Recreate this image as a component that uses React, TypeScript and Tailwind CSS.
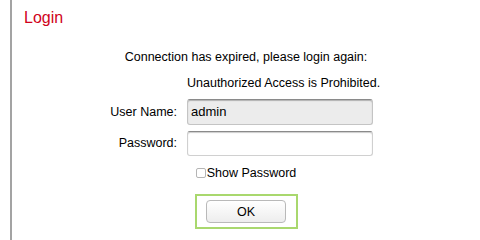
export default function App() {
  return (
    <div className="h-[240px] w-[480px] overflow-hidden bg-white font-['Liberation_Sans',Arial,sans-serif] text-[12px] text-black">
      <div className="ml-[10px] h-full border-l-2 border-[#a3a3a3] pl-[12px]">
        <h1 className="pt-[8px] text-[16px] leading-[20px] text-[#d0021b]">Login</h1>

        <p className="mt-[22px] whitespace-nowrap pr-[12px] text-center text-[12.5px] leading-[15px]">
          Connection has expired, please login again:
        </p>

        <div className="mt-[11px] flex">
          <div className="w-[153px]" />
          <p className="ml-[10px] w-[186px] whitespace-nowrap text-center text-[12.5px] leading-[15px]">
            Unauthorized Access is Prohibited.
          </p>
        </div>

        <div className="mt-[8px] flex items-center">
          <label className="w-[153px] text-right text-[12.5px]">User Name:</label>
          <div className="ml-[10px] flex h-[26px] w-[186px] items-center rounded-[3px] border border-[#c4c4c4] border-t-[#8a8a8a] bg-[#ececec] px-[3px] text-[13px] shadow-[inset_0_1px_1px_rgba(0,0,0,0.25)]">
            admin
          </div>
        </div>

        <div className="mt-[6px] flex items-center">
          <label className="w-[153px] text-right text-[12.5px]">Password:</label>
          <div className="ml-[10px] h-[25px] w-[186px] rounded-[3px] border border-[#d0d0d0] border-t-[#8a8a8a] bg-white shadow-[inset_0_1px_1px_rgba(0,0,0,0.2)]" />
        </div>

        <div className="mt-[9px] flex items-center justify-center pr-[12px]">
          <span className="h-[10px] w-[10px] rounded-[2px] border border-[#b5b5b5] bg-white" />
          <span className="ml-[1px] text-[12.5px] leading-[16px]">Show Password</span>
        </div>

        <div className="mt-[13px] flex justify-center pr-[12px]">
          <div className="flex h-[35px] w-[103px] items-center justify-center border-2 border-[#a9d86e]">
            <button className="h-[23px] w-[80px] rounded-[4px] border border-[#b9b9b9] bg-gradient-to-b from-white to-[#ededed] text-[12.5px] leading-[20px]">
              OK
            </button>
          </div>
        </div>
      </div>
    </div>
  );
}
